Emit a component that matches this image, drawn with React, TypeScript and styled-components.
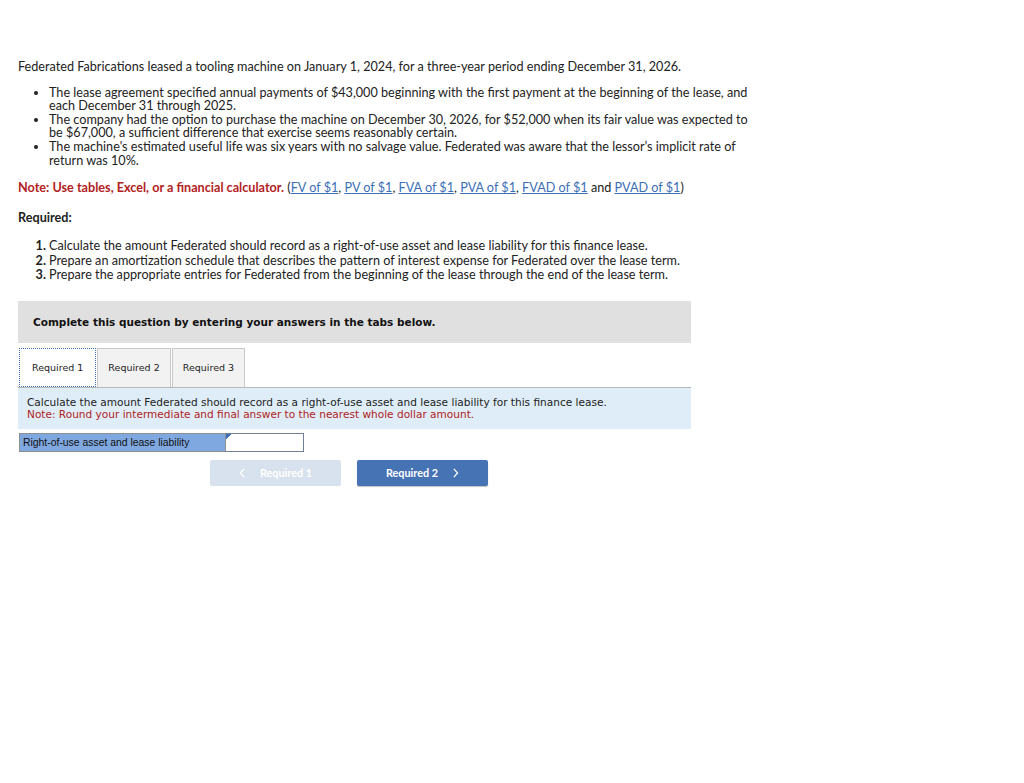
import React from "react";
import styled, { createGlobalStyle } from "styled-components";

const GlobalStyle = createGlobalStyle`
  body {
    margin: 0;
    background: #fff;
    font-family: "Lato", "Liberation Sans", sans-serif;
    color: #222;
  }
`;

const links = ["FV of $1", "PV of $1", "FVA of $1", "PVA of $1", "FVAD of $1", "PVAD of $1"];

const facts = [
  "The lease agreement specified annual payments of $43,000 beginning with the first payment at the beginning of the lease, and each December 31 through 2025.",
  "The company had the option to purchase the machine on December 30, 2026, for $52,000 when its fair value was expected to be $67,000, a sufficient difference that exercise seems reasonably certain.",
  "The machine's estimated useful life was six years with no salvage value. Federated was aware that the lessor’s implicit rate of return was 10%.",
];

const steps = [
  "Calculate the amount Federated should record as a right-of-use asset and lease liability for this finance lease.",
  "Prepare an amortization schedule that describes the pattern of interest expense for Federated over the lease term.",
  "Prepare the appropriate entries for Federated from the beginning of the lease through the end of the lease term.",
];

const tabs = ["Required 1", "Required 2", "Required 3"];

const App = () => {
  return (
    <Page>
      <GlobalStyle />
      <Question>
        <Intro>
          Federated Fabrications leased a tooling machine on January 1, 2024, for a three-year period ending December 31, 2026.
        </Intro>
        <Bullets>
          {facts.map((f) => (
            <li key={f}>{f}</li>
          ))}
        </Bullets>
        <NoteLine>
          <strong>Note: Use tables, Excel, or a financial calculator.</strong> (
          {links.map((l, i) => (
            <React.Fragment key={l}>
              <TableLink href="#">{l}</TableLink>
              {i < links.length - 2 ? ", " : i === links.length - 2 ? " and " : ""}
            </React.Fragment>
          ))}
          )
        </NoteLine>
        <RequiredHeading>Required:</RequiredHeading>
        <Steps>
          {steps.map((s) => (
            <li key={s}>{s}</li>
          ))}
        </Steps>
      </Question>

      <Worksheet>
        <Banner>Complete this question by entering your answers in the tabs below.</Banner>
        <TabBar>
          {tabs.map((t, i) => (
            <Tab key={t} $active={i === 0}>
              {t}
            </Tab>
          ))}
        </TabBar>
        <Instructions>
          <div>Calculate the amount Federated should record as a right-of-use asset and lease liability for this finance lease.</div>
          <RedNote>Note: Round your intermediate and final answer to the nearest whole dollar amount.</RedNote>
        </Instructions>
        <AnswerRow>
          <AnswerLabel>Right-of-use asset and lease liability</AnswerLabel>
          <AnswerInput type="text" />
        </AnswerRow>
        <NavRow>
          <NavButton $disabled>
            <Chevron viewBox="0 0 8 12">
              <path d="M6 1L1.5 6L6 11" />
            </Chevron>
            Required 1
          </NavButton>
          <NavButton>
            Required 2
            <Chevron viewBox="0 0 8 12">
              <path d="M2 1L6.5 6L2 11" />
            </Chevron>
          </NavButton>
        </NavRow>
      </Worksheet>
    </Page>
  );
};

export default App;

const Page = styled.div`
  padding: 60px 0 40px 18px;
  width: 740px;
`;

const Question = styled.div`
  font-size: 12.65px;
  line-height: 13.6px;
`;

const Intro = styled.p`
  margin: 0 0 12px;
`;

const Bullets = styled.ul`
  margin: 0 0 14px;
  padding-left: 31px;
  li {
    margin: 0;
  }
`;

const NoteLine = styled.p`
  margin: 0 0 16px;
  strong {
    color: #b22222;
    font-weight: 700;
  }
`;

const TableLink = styled.a`
  color: #3b6fb6;
  text-decoration: underline;
`;

const RequiredHeading = styled.p`
  margin: 0 0 15px;
  font-weight: 700;
`;

const Steps = styled.ol`
  margin: 0;
  padding-left: 31px;
  li {
    line-height: 14.5px;
  }
  li::marker {
    font-weight: 700;
  }
`;

const Worksheet = styled.div`
  width: 673px;
  margin-top: 18px;
  font-family: "DejaVu Sans", Verdana, sans-serif;
`;

const Banner = styled.div`
  background: #e0e0e0;
  height: 42px;
  padding: 0 15px;
  display: flex;
  align-items: center;
  font-size: 10.5px;
  font-weight: 700;
  color: #111;
`;

const TabBar = styled.div`
  display: flex;
  gap: 1px;
  margin-top: 5px;
  padding-left: 1px;
`;

const Tab = styled.div<{ $active?: boolean }>`
  height: 39px;
  padding: ${(p) => (p.$active ? "0 12px" : "0 10px")};
  display: flex;
  align-items: center;
  font-size: 9.5px;
  color: #222;
  box-sizing: border-box;
  background: ${(p) => (p.$active ? "#fff" : "#f2f2f2")};
  border: ${(p) => (p.$active ? "1px dotted #3b6fb6" : "1px solid #c8c8c8")};
  border-bottom: ${(p) => (p.$active ? "1px dotted #3b6fb6" : "none")};
`;

const Instructions = styled.div`
  background: #deedf8;
  border-top: 1px solid #b8b8b8;
  height: 41px;
  padding: 0 9px;
  display: flex;
  flex-direction: column;
  justify-content: center;
  font-size: 10.55px;
  line-height: 12.5px;
  color: #222;
`;

const RedNote = styled.div`
  color: #b22222;
`;

const AnswerRow = styled.div`
  display: flex;
  margin: 4px 0 0 1px;
  height: 19px;
`;

const AnswerLabel = styled.div`
  width: 206px;
  background: #7fa8e0;
  border: 1px solid #8f8f8f;
  border-right: none;
  box-sizing: border-box;
  padding: 0 3px;
  display: flex;
  align-items: center;
  font-family: "Liberation Sans", Arial, sans-serif;
  font-size: 10.4px;
  color: #111;
`;

const AnswerInput = styled.input`
  width: 79px;
  height: 19px;
  box-sizing: border-box;
  border: 1px solid #6d7f99;
  border-left: 1px solid #8f8f8f;
  margin: 0;
  padding: 0 3px;
  background:
    linear-gradient(135deg, #3b6fb6 0, #3b6fb6 4px, transparent 4px) no-repeat,
    #fff;
  outline: none;
`;

const NavRow = styled.div`
  display: flex;
  gap: 16px;
  margin: 8px 0 0 192px;
`;

const NavButton = styled.div<{ $disabled?: boolean }>`
  width: 131px;
  height: 26px;
  border-radius: 2px;
  display: flex;
  align-items: center;
  justify-content: center;
  gap: 14px;
  font-family: "Lato", "Liberation Sans", sans-serif;
  font-size: 10.8px;
  font-weight: 700;
  color: #fff;
  background: ${(p) => (p.$disabled ? "#d8e2ee" : "#4673b4")};
  box-shadow: ${(p) => (p.$disabled ? "none" : "0 1px 1px rgba(0,0,0,0.25)")};
`;

const Chevron = styled.svg`
  width: 7px;
  height: 10px;
  fill: none;
  stroke: #fff;
  stroke-width: 1.5;
`;
